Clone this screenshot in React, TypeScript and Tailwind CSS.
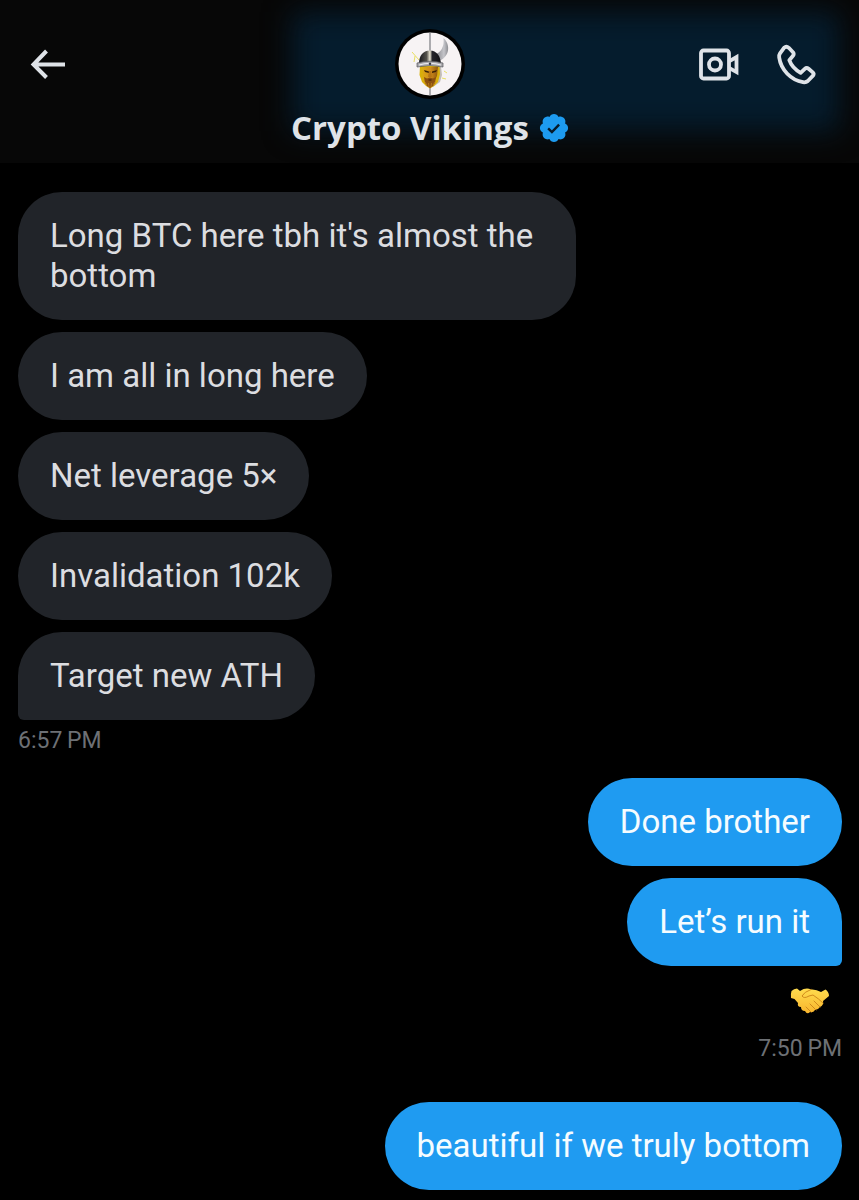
import React from 'react'

type Message = {
  text: string
  tail?: boolean
}

const received: Message[] = [
  { text: "Long BTC here tbh it's almost the bottom" },
  { text: 'I am all in long here' },
  { text: 'Net leverage 5×' },
  { text: 'Invalidation 102k' },
  { text: 'Target new ATH', tail: true },
]

const sent: Message[] = [{ text: 'Done brother' }, { text: 'Let’s run it', tail: true }]

const BackIcon = () => (
  <svg viewBox="0 0 36 30" className="h-[30px] w-9" fill="none" stroke="currentColor" strokeWidth="4">
    <path d="M4 15.500h31M16.5 2L3.5 15.500l13 13" />
  </svg>
)

const VideoIcon = () => (
  <svg viewBox="0 0 42 42" className="size-[42px]" fill="none" stroke="currentColor" strokeWidth="3.8">
    <rect x="3" y="7.5" width="28" height="28" rx="2.5" />
    <circle cx="17" cy="21.500" r="6" />
    <path d="M31 18.3l7.500-4.2v15l-7.500-4.2" />
  </svg>
)

const PhoneIcon = () => (
  <svg viewBox="0 0 42 42" className="size-[42px]" fill="none" stroke="currentColor" strokeWidth="3.8" strokeLinejoin="round">
    <path d="M8.2 4.6L4 10.3Q2.8 12 3.2 14.5C5 27 15 37 27 39.2Q30 39.7 31.8 38L37 32.7Q38.4 31 36.8 29.4L32.6 25.8Q30.6 24.2 28.800 25.8L24.6 29.8C19.5 27 15 22 13.3 17.2L17 12.8Q18.4 11 17 9.2L12.8 4.8Q10.4 2.6 8.2 4.6Z" />
  </svg>
)

const VerifiedBadge = () => (
  <svg viewBox="1 1 20 20" className="size-[30px]" role="img" aria-label="Verified account">
    <path
      fill="#1d9bf0"
      d="M20.396 11c-.018-.646-.215-1.275-.57-1.816-.354-.54-.852-.972-1.438-1.246.223-.607.27-1.264.14-1.897-.131-.634-.437-1.218-.882-1.687-.47-.445-1.053-.75-1.687-.882-.633-.13-1.29-.083-1.897.14-.273-.587-.704-1.086-1.245-1.44S11.647 1.62 11 1.604c-.646.017-1.273.213-1.813.568s-.969.854-1.24 1.44c-.608-.223-1.267-.272-1.902-.14-.635.13-1.22.436-1.69.882-.445.47-.749 1.055-.878 1.688-.13.633-.08 1.29.144 1.896-.587.274-1.087.705-1.443 1.245-.356.54-.555 1.17-.574 1.817.02.647.218 1.276.574 1.817.356.54.856.972 1.443 1.245-.224.606-.274 1.263-.144 1.896.13.634.433 1.218.877 1.688.47.443 1.054.747 1.687.878.633.132 1.29.084 1.897-.136.274.586.705 1.084 1.246 1.439.54.354 1.17.551 1.816.569.647-.016 1.276-.213 1.817-.567s.972-.854 1.245-1.44c.604.239 1.266.296 1.903.164.636-.132 1.22-.447 1.68-.907.46-.46.776-1.044.908-1.681s.075-1.299-.165-1.903c.586-.274 1.084-.705 1.439-1.246.354-.54.551-1.17.569-1.816z"
    />
    <path d="M7.1 11.3l2.5 2.4 4.8-5" fill="none" stroke="#061a2a" strokeWidth="1.6" />
  </svg>
)

const Avatar = () => (
  <svg viewBox="0 0 70 70" className="size-[70px]" role="img" aria-label="Crypto Vikings">
    <defs>
      <linearGradient id="helmet" x1="0" x2="1">
        <stop offset="0" stopColor="#17171b" />
        <stop offset=".35" stopColor="#55534c" />
        <stop offset=".5" stopColor="#eee9d6" />
        <stop offset=".6" stopColor="#24242a" />
        <stop offset="1" stopColor="#101014" />
      </linearGradient>
      <linearGradient id="horn" x1="0" x2="1">
        <stop offset="0" stopColor="#77777c" />
        <stop offset=".7" stopColor="#c5c5ca" />
        <stop offset="1" stopColor="#8b8b90" />
      </linearGradient>
      <linearGradient id="face" x1="0" x2="1">
        <stop offset="0" stopColor="#dba514" />
        <stop offset=".5" stopColor="#d18c1c" />
        <stop offset="1" stopColor="#8d560c" />
      </linearGradient>
    </defs>
    <circle cx="35" cy="35" r="35" fill="#000" />
    <circle cx="35" cy="35" r="31.5" fill="#f7f3f4" />
    <path d="M35 4v19M35 57v9" stroke="#85858a" strokeWidth="1.3" />
    <path d="M17 23l7 8M20 27l-1 6M49 42l3 2M47 49l4 1" stroke="#e9df63" strokeWidth="1" />
    <path d="M48.5 9C56 16 54 27 46 31L41 31 39 26Q50 22 48.5 9Z" fill="url(#horn)" />
    <path d="M38 38h8l1 8-2 7-7 5Z" fill="#c2bdb7" />
    <path d="M25 37L24.500 46 27 53 31 57 35 59.500 39 57 43 53 45 45 44.500 37Z" fill="#d9ae0b" />
    <path d="M28 38h15l-1 9-3 6-4 4-4-4-3-6Z" fill="url(#face)" />
    <path d="M29 41l5 1.500v1.500l-4-1ZM42 41l-5 1.500v1.500l4-1Z" fill="#3a2006" />
    <path d="M34 42l-1 6h4l-1-6" fill="#b77515" />
    <path d="M29 48l3 1.500 3-1 3 1 3-1.500-1 6-2 3-3 2-3-2-2-3Z" fill="#8c500f" />
    <path d="M33.500 51h3" stroke="#3d2006" strokeWidth="1" />
    <path d="M30 53l2 3M33.500 54l.5 4M36.500 54l-.5 4M40 53l-2 3" stroke="#c48818" strokeWidth=".7" />
    <path d="M24 35Q24 22 35 21.500 45 22 46 35Z" fill="url(#helmet)" />
    <path d="M22 34Q35 30.500 48 34v4Q35 35 22 38Z" fill="#aaa9ad" stroke="#55555a" strokeWidth=".7" />
    <path d="M24 36Q35 32.500 46 36" fill="none" stroke="#ececf0" strokeWidth="1.2" />
    <circle cx="35" cy="34.700" r="1.200" fill="#333842" />
  </svg>
)

const Handshake = () => (
  <svg viewBox="0 0 40 28" className="h-7 w-10" role="img" aria-label="Handshake">
    <defs>
      <linearGradient id="skin" x2="0" y2="1">
        <stop offset="0" stopColor="#ffdc4e" />
        <stop offset="1" stopColor="#f8b52d" />
      </linearGradient>
    </defs>
    <path
      d="M1.500 4Q4 1.500 7 1.500L10 4Q16 0 21 2.500Q26 2 31 5L35.500 2.500Q39 5 39 9L33 14Q34 18 30 20Q28 23 25 23Q23 26 20 25Q17 28 15 24Q11 24 11 20Q7 20 8 16L4.500 12 1 11Q.500 7 1.500 4Z"
      fill="url(#skin)"
    />
    <path
      d="M21 2.500Q14 5 12 9Q14 12 19 9L23 8Q29 12 33 16M24 14l6 6M20 17l6 6M16 20l5 5"
      fill="none"
      stroke="#d08a1c"
      strokeWidth="1"
      strokeLinecap="round"
    />
  </svg>
)

const ReceivedBubble = ({ text, tail }: Message) => (
  <p
    className={`max-w-[558px] rounded-[44px] bg-[#212429] px-8 py-6 text-[#dcdde0] ${tail ? 'rounded-bl-[6px]' : ''}`}
  >
    {text}
  </p>
)

const SentBubble = ({ text, tail }: Message) => (
  <p className={`max-w-[558px] rounded-[44px] bg-[#1f9bf1] px-8 py-6 text-[#f5fcff] ${tail ? 'rounded-br-[6px]' : ''}`}>
    {text}
  </p>
)

const Header = () => (
  <header className="relative overflow-hidden bg-[#070707] text-[#dfe3e8]">
    <div className="absolute top-3 right-5 bottom-8 left-[34%] bg-[#051c2d] blur-[14px]" />
    <div className="relative grid grid-cols-[1fr_auto_1fr] pt-[29px] pr-[29px] pb-3 pl-[30px]">
      <button type="button" aria-label="Back" className="flex h-[70px] items-center justify-self-start">
        <BackIcon />
      </button>
      <div className="flex flex-col items-center gap-[7px]">
        <Avatar />
        <h1 className="flex items-center gap-[10px] pb-px font-['Open_Sans',sans-serif] text-[33px] leading-[44px] font-bold">
          Crypto Vikings
          <VerifiedBadge />
        </h1>
      </div>
      <div className="flex h-[70px] items-center gap-9 justify-self-end pr-3">
        <button type="button" aria-label="Video call">
          <VideoIcon />
        </button>
        <button type="button" aria-label="Voice call">
          <PhoneIcon />
        </button>
      </div>
    </div>
  </header>
)

const App = () => {
  return (
    <div className="min-h-screen bg-black font-[Roboto,sans-serif]">
      <Header />
      <main className="pt-[29px] pr-[17px] pb-[10px] pl-[18px] text-[33px] leading-10">
        <section className="flex flex-col items-start gap-3">
          {received.map((message) => (
            <ReceivedBubble key={message.text} {...message} />
          ))}
        </section>
        <time className="mt-[3px] block text-[23px] leading-9 text-[#6d7075]">6:57{'\u2009'}PM</time>
        <section className="mt-[19px] flex flex-col items-end gap-3">
          {sent.map((message) => (
            <SentBubble key={message.text} {...message} />
          ))}
        </section>
        <div className="mt-[21px] flex justify-end pr-3">
          <Handshake />
        </div>
        <time className="mt-4 block text-right text-[23px] leading-9 text-[#6d7075]">7:50{'\u2009'}PM</time>
        <section className="mt-[35px] flex flex-col items-end">
          <SentBubble text="beautiful if we truly bottom" />
        </section>
      </main>
    </div>
  )
}

export default App
